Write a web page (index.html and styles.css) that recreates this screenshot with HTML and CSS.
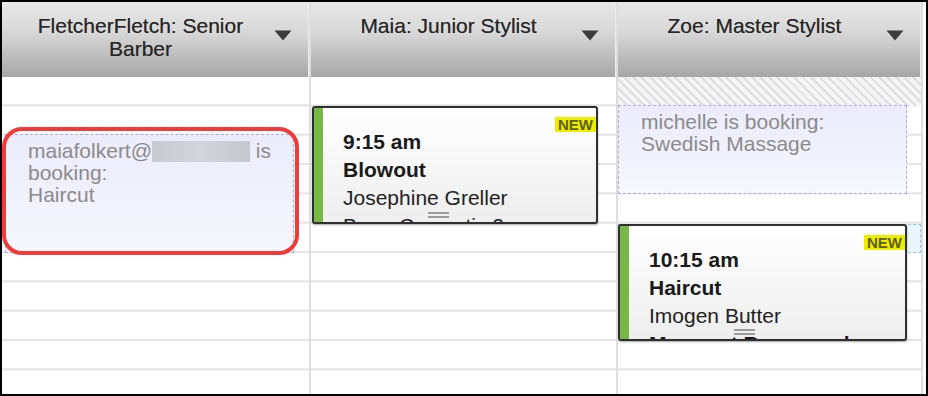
FILE: index.html
```html
<!DOCTYPE html>
<html>
<head>
<meta charset="utf-8">
<link rel="stylesheet" href="styles.css">
</head>
<body>
<div class="frame">
  <div class="calendar">
    <section class="col">
      <header class="head">
        <div class="title">FletcherFletch: Senior<br>Barber</div>
        <svg class="caret" viewBox="0 0 18 11"><polygon points="0.5,0.5 17.5,0.5 9,10.5" /></svg>
      </header>
      <div class="slots">
        <div class="booking booking-1"><span>maiafolkert@</span><span class="redact"></span> is booking:<br>Haircut</div>
      </div>
    </section>
    <section class="col">
      <header class="head">
        <div class="title">Maia: Junior Stylist</div>
        <svg class="caret" viewBox="0 0 18 11"><polygon points="0.5,0.5 17.5,0.5 9,10.5" /></svg>
      </header>
      <div class="slots">
        <div class="card card-2">
          <div class="bar"></div>
          <div class="info">
            <div class="strong">9:15 am</div>
            <div class="strong">Blowout</div>
            <div>Josephine Greller</div>
            <div>Berry Cosmetic 2</div>
          </div>
          <span class="badge">NEW</span>
          <span class="grip"></span>
        </div>
      </div>
    </section>
    <section class="col col-3">
      <header class="head">
        <div class="title">Zoe: Master Stylist</div>
        <svg class="caret" viewBox="0 0 18 11"><polygon points="0.5,0.5 17.5,0.5 9,10.5" /></svg>
      </header>
      <div class="slots">
        <div class="hatch"></div>
        <div class="booking booking-2">michelle is booking:<br>Swedish Massage</div>
        <div class="ghost"></div>
        <div class="card card-3">
          <div class="bar"></div>
          <div class="info">
            <div class="strong">10:15 am</div>
            <div class="strong">Haircut</div>
            <div>Imogen Butter</div>
            <div class="strong">Margaret Rosewood</div>
          </div>
          <span class="badge">NEW</span>
          <span class="grip"></span>
        </div>
      </div>
    </section>
  </div>
</div>
</body>
</html>
```
FILE: styles.css
```css
body {
  margin: 0;
  font-family: "Liberation Sans", Arial, sans-serif;
}

.frame {
  width: 928px;
  height: 396px;
  box-sizing: border-box;
  border: 2px solid #000;
  padding-right: 3px;
  background: #fff;
  overflow: hidden;
}

.calendar {
  display: grid;
  grid-template-columns: 309px 307px 305px;
  height: 100%;
}

.col {
  display: flex;
  flex-direction: column;
  border-right: 2px solid #dedede;
  min-width: 0;
  min-height: 0;
}

.head {
  flex: none;
  height: 75px;
  box-sizing: border-box;
  display: grid;
  background: linear-gradient(to bottom, #e8e8e8 0%, #d8d8d8 40%, #bbbbbb 75%, #a6a6a6 100%);
  border-right: 1px solid #ececec;
}

.title {
  grid-area: 1 / 1;
  padding: 12px 29px 0 0;
  text-align: center;
  white-space: nowrap;
  font-size: 21px;
  line-height: 23px;
  color: #262626;
  text-shadow: 0 0 0.6px rgba(0, 0, 0, 0.5);
}

.caret {
  grid-area: 1 / 1;
  justify-self: end;
  align-self: start;
  width: 18px;
  height: 11px;
  margin: 28px 16px 0 0;
  fill: #3c3c3c;
}

.slots {
  flex: 1;
  min-height: 0;
  overflow: hidden;
  display: grid;
  grid-template-columns: 1fr;
  grid-template-rows: repeat(11, 29.333px);
  background-image: linear-gradient(to bottom, transparent 27.8px, #e3e3e3 27.8px);
  background-size: 100% 29.333px;
}

.col-3 .slots {
  grid-template-columns: 1fr 14px;
}

.booking {
  grid-column: 1;
  box-sizing: border-box;
  border: 1px dashed #a9a9ee;
  background: linear-gradient(to bottom, #ebebfb, #f7f7fe);
  padding: 5px 8px 0 22px;
  font-size: 21px;
  line-height: 22px;
  color: #8b8b8b;
}

.booking-1 {
  grid-row: 3 / 7;
  margin: -2px 15px 0 3px;
  position: relative;
}

.booking-1::after {
  content: "";
  position: absolute;
  top: -8px;
  left: -4px;
  right: -6px;
  bottom: -3px;
  border: 4px solid #f13b3b;
  border-radius: 20px;
}

.redact {
  display: inline-block;
  width: 98px;
  height: 21px;
  vertical-align: -4px;
  background: linear-gradient(90deg, #c8c8d0, #d4d4dc 50%, #c6c6ce);
}

.booking-2 {
  grid-row: 2 / 5;
  margin-top: -1px;
}

.hatch {
  grid-row: 1;
  grid-column: 1 / -1;
  background: repeating-linear-gradient(45deg, #dedede 0 2px, #f5f5f5 2px 6px);
}

.ghost {
  grid-row: 6;
  grid-column: 1 / -1;
  border: 1px dashed #8fc4ee;
  background: #eaf5fc;
}

.card {
  position: relative;
  display: flex;
  box-sizing: border-box;
  border: 2px solid #2f2f2f;
  border-radius: 3px;
  background: linear-gradient(to bottom, #ffffff, #eeeeee);
  box-shadow: 0 1px 2px rgba(0, 0, 0, 0.35);
  overflow: hidden;
}

.card-2 {
  grid-row: 2 / 6;
  margin: 0 18px 0 1px;
}

.card-3 {
  grid-row: 6 / 10;
  grid-column: 1;
}

.bar {
  flex: none;
  width: 9px;
  background: #78b846;
}

.info {
  padding: 20px 0 0 20px;
  font-size: 21px;
  line-height: 28px;
  color: #222;
  white-space: nowrap;
}

.strong {
  font-weight: bold;
  color: #1a1a1a;
}

.badge {
  position: absolute;
  top: 9px;
  right: 0;
  padding: 0 3px;
  background: #eded00;
  color: #5f5f00;
  font-weight: bold;
  font-size: 15px;
  line-height: 15px;
}

.grip {
  position: absolute;
  left: 114px;
  bottom: 4px;
  width: 21px;
  height: 6px;
  box-sizing: border-box;
  border-top: 2px solid #9c9c9c;
  border-bottom: 2px solid #9c9c9c;
}
```
